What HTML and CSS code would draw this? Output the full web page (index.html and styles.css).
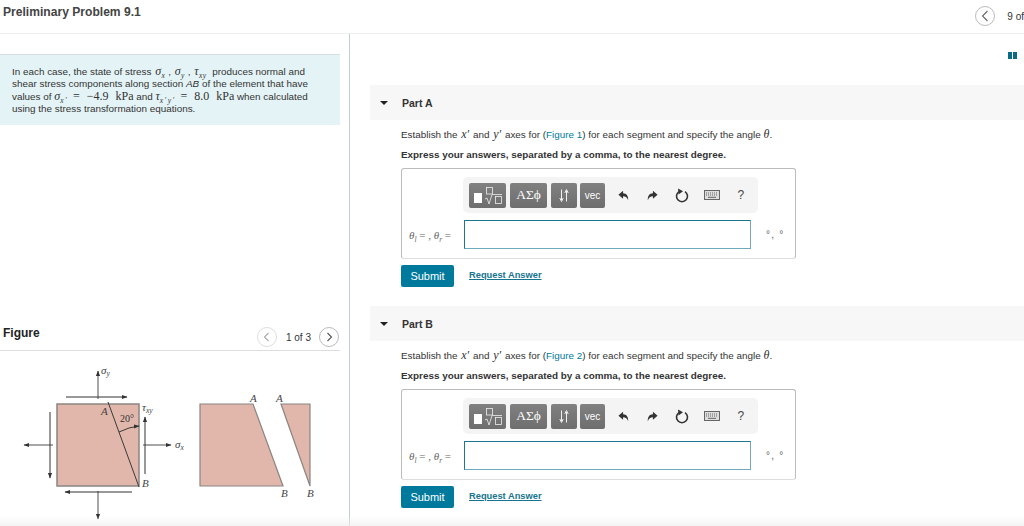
FILE: index.html
```html
<!DOCTYPE html>
<html lang="en">
<head>
    <meta charset="UTF-8">
    <title>Preliminary Problem 9.1</title>
    <link rel="stylesheet" href="styles.css">
</head>
<body>
    <header class="top-bar">
        <h1 class="page-title">Preliminary Problem 9.1</h1>
        <div class="top-nav">
            <span class="nav-btn nav-big"><svg width="8" height="12" viewBox="0 0 8 12"><path d="M6.5 1 L1.5 6 L6.5 11" fill="none" stroke="#666" stroke-width="1.1"/></svg></span>
            <span class="top-count">9 of</span>
        </div>
    </header>

    <div class="columns">
        <section class="left-col">
            <div class="intro">
                In each case, the state of stress <i class="m sym">σ<sub>x</sub></i>, <i class="m sym">σ<sub>y</sub></i>, <i class="m sym">τ<sub>xy</sub></i> produces normal and<br>
                shear stress components along section <i>AB</i> of the element that have<br>
                values of <i class="m sym-eq">σ<sub>x′</sub></i> <span class="m eq">= −4.9 kPa</span> and <i class="m sym-eq">τ<sub>x′y′</sub></i> <span class="m eq">= 8.0 kPa</span> when calculated<br>
                using the stress transformation equations.
            </div>

            <div class="figure-head">
                <h2 class="figure-title">Figure</h2>
                <div class="figure-nav">
                    <span class="nav-btn nav-off"><svg width="7" height="10" viewBox="0 0 7 10"><path d="M5.5 1 L1.5 5 L5.5 9" fill="none" stroke="#aaa" stroke-width="1.1"/></svg></span>
                    <span class="figure-count">1 of 3</span>
                    <span class="nav-btn"><svg width="7" height="10" viewBox="0 0 7 10"><path d="M1.5 1 L5.5 5 L1.5 9" fill="none" stroke="#555" stroke-width="1.1"/></svg></span>
                </div>
            </div>

            <svg class="diagram" width="340" height="166" viewBox="0 360 340 166">
                <defs>
                    <marker id="head" markerUnits="userSpaceOnUse" markerWidth="6" markerHeight="6" refX="5" refY="3" orient="auto">
                        <path d="M0 0.9 L5.5 3 L0 5.1 Z" fill="#333"/>
                    </marker>
                </defs>
                <rect x="57" y="405" width="82" height="82" fill="#e0b7aa" stroke="#8a8583" stroke-width="1.5"/>
                <path d="M200 405 H253 L283 487 H200 Z" fill="#e0b7aa" stroke="#8a8583" stroke-width="1.2"/>
                <path d="M281 405 H310 V487 Z" fill="#e0b7aa" stroke="#8a8583" stroke-width="1.2"/>
                <path d="M108 403 L139 488" stroke="#3a3a3a" fill="none"/>
                <path d="M119 433 Q129 428 139 427" stroke="#3a3a3a" fill="none" marker-end="url(#head)"/>

                <g fill="none" stroke="#777" stroke-width="1.3">
                    <path d="M98 400 V372" marker-end="url(#head)"/>
                    <path d="M143 446 H171" marker-end="url(#head)"/>
                    <path d="M53 446 H24" marker-end="url(#head)"/>
                    <path d="M98 492 V520" marker-end="url(#head)"/>
                </g>
                <g fill="none" stroke="#333" stroke-width="1">
                    <path d="M66 398 H127" marker-end="url(#head)"/>
                    <path d="M145 475 V418" marker-end="url(#head)"/>
                    <path d="M50 413 V479" marker-end="url(#head)"/>
                    <path d="M132 493 H65" marker-end="url(#head)"/>
                </g>

                <g class="fig-label">
                    <text x="101" y="375">σ<tspan class="fig-sub" dy="2">y</tspan></text>
                    <text x="175" y="449">σ<tspan class="fig-sub" dy="2">x</tspan></text>
                    <text x="142" y="412">τ<tspan class="fig-sub" dy="2">xy</tspan></text>
                    <text x="101" y="416">A</text>
                    <text x="142" y="488">B</text>
                    <text x="250" y="403">A</text>
                    <text x="276" y="403">A</text>
                    <text x="281" y="498">B</text>
                    <text x="307" y="498">B</text>
                </g>
                <text class="fig-angle" x="120" y="423">20°</text>
            </svg>
        </section>

        <main class="right-col">
            <div class="pause-row">
                <svg width="9" height="7" viewBox="0 0 9 7"><rect width="4" height="7" fill="#0b6a85"/><rect x="5" width="4" height="7" fill="#0b6a85"/></svg>
            </div>

            <section class="part">
                <div class="part-bar">
                    <span class="part-arrow"></span>
                    <h3 class="part-title">Part A</h3>
                </div>
                <div class="part-body">
                    <p class="question">Establish the <i class="m var">x′</i> and <i class="m var">y′</i> axes for (<a class="fig-link">Figure 1</a>) for each segment and specify the angle <i class="m">θ</i>.</p>
                    <p class="express">Express your answers, separated by a comma, to the nearest degree.</p>
                    <div class="answer-box">
                        <div class="toolbar">
                            <span class="tool tool-templates">
                                <svg width="31" height="19" viewBox="0 0 31 19"><rect x="2" y="7" width="8" height="10" fill="#fff"/><g fill="none" stroke="#eee" stroke-width="0.8"><rect x="14.5" y="1.5" width="6" height="6.5"/><path d="M13 13 L15 12 L17 18 L20 8.5 H30"/><rect x="23.5" y="10.5" width="6" height="7"/></g></svg>
                            </span>
                            <span class="tool tool-greek">ΑΣϕ</span>
                            <span class="tool tool-arrows"><svg width="10" height="13" viewBox="0 0 10 13"><path d="M2.5 0.5 V11 M0.8 9 L2.5 12.5 L4.2 9 M7.5 12.5 V2 M5.8 4 L7.5 0.5 L9.2 4" fill="none" stroke="#fff" stroke-width="0.9"/></svg></span>
                            <span class="tool tool-vec">vec</span>
                            <span class="action action-first"><svg width="11" height="11" viewBox="0 0 13 12"><path d="M0.5 5 L6 0.5 V3.2 C10 3.2 12.5 6.5 12 11.5 C11 8.5 9 7 6 7 V9.8 Z" fill="#333"/></svg></span>
                            <span class="action"><svg width="11" height="11" viewBox="0 0 13 12"><path d="M12.5 5 L7 0.5 V3.2 C3 3.2 0.5 6.5 1 11.5 C2 8.5 4 7 7 7 V9.8 Z" fill="#333"/></svg></span>
                            <span class="action"><svg width="14" height="15" viewBox="0 0 14 15"><path d="M4 3.6 A5.5 5.5 0 1 0 10 3.6" fill="none" stroke="#333" stroke-width="1.6"/><path d="M3 0.6 L8 3.2 L3.6 6.4 Z" fill="#333"/></svg></span>
                            <span class="action"><svg width="16" height="10" viewBox="0 0 16 10"><rect x="0.5" y="0.5" width="15" height="9" fill="#ddd" stroke="#666"/><path d="M2 3 H14 M2 5 H14" stroke="#666" stroke-dasharray="1 1"/><path d="M4 7.3 H12" stroke="#666"/></svg></span>
                            <span class="action action-help">?</span>
                        </div>
                        <div class="input-row">
                            <span class="input-label"><i>θ<sub>l</sub></i> = , <i>θ<sub>r</sub></i> =</span>
                            <span class="answer-input"></span>
                            <span class="units">°, °</span>
                        </div>
                    </div>
                    <div class="submit-row">
                        <span class="submit-btn">Submit</span>
                        <a class="request-link">Request Answer</a>
                    </div>
                </div>
            </section>

            <section class="part">
                <div class="part-bar">
                    <span class="part-arrow"></span>
                    <h3 class="part-title">Part B</h3>
                </div>
                <div class="part-body">
                    <p class="question">Establish the <i class="m var">x′</i> and <i class="m var">y′</i> axes for (<a class="fig-link">Figure 2</a>) for each segment and specify the angle <i class="m">θ</i>.</p>
                    <p class="express">Express your answers, separated by a comma, to the nearest degree.</p>
                    <div class="answer-box">
                        <div class="toolbar">
                            <span class="tool tool-templates">
                                <svg width="31" height="19" viewBox="0 0 31 19"><rect x="2" y="7" width="8" height="10" fill="#fff"/><g fill="none" stroke="#eee" stroke-width="0.8"><rect x="14.5" y="1.5" width="6" height="6.5"/><path d="M13 13 L15 12 L17 18 L20 8.5 H30"/><rect x="23.5" y="10.5" width="6" height="7"/></g></svg>
                            </span>
                            <span class="tool tool-greek">ΑΣϕ</span>
                            <span class="tool tool-arrows"><svg width="10" height="13" viewBox="0 0 10 13"><path d="M2.5 0.5 V11 M0.8 9 L2.5 12.5 L4.2 9 M7.5 12.5 V2 M5.8 4 L7.5 0.5 L9.2 4" fill="none" stroke="#fff" stroke-width="0.9"/></svg></span>
                            <span class="tool tool-vec">vec</span>
                            <span class="action action-first"><svg width="11" height="11" viewBox="0 0 13 12"><path d="M0.5 5 L6 0.5 V3.2 C10 3.2 12.5 6.5 12 11.5 C11 8.5 9 7 6 7 V9.8 Z" fill="#333"/></svg></span>
                            <span class="action"><svg width="11" height="11" viewBox="0 0 13 12"><path d="M12.5 5 L7 0.5 V3.2 C3 3.2 0.5 6.5 1 11.5 C2 8.5 4 7 7 7 V9.8 Z" fill="#333"/></svg></span>
                            <span class="action"><svg width="14" height="15" viewBox="0 0 14 15"><path d="M4 3.6 A5.5 5.5 0 1 0 10 3.6" fill="none" stroke="#333" stroke-width="1.6"/><path d="M3 0.6 L8 3.2 L3.6 6.4 Z" fill="#333"/></svg></span>
                            <span class="action"><svg width="16" height="10" viewBox="0 0 16 10"><rect x="0.5" y="0.5" width="15" height="9" fill="#ddd" stroke="#666"/><path d="M2 3 H14 M2 5 H14" stroke="#666" stroke-dasharray="1 1"/><path d="M4 7.3 H12" stroke="#666"/></svg></span>
                            <span class="action action-help">?</span>
                        </div>
                        <div class="input-row">
                            <span class="input-label"><i>θ<sub>l</sub></i> = , <i>θ<sub>r</sub></i> =</span>
                            <span class="answer-input"></span>
                            <span class="units">°, °</span>
                        </div>
                    </div>
                    <div class="submit-row">
                        <span class="submit-btn">Submit</span>
                        <a class="request-link">Request Answer</a>
                    </div>
                </div>
            </section>
        </main>
    </div>
    <div class="bottom-fade"></div>
</body>
</html>
```

FILE: styles.css
```css
html, body {
    height: 526px;
    overflow: hidden;
}
body {
    position: relative;
    margin: 0;
    font-family: 'Liberation Sans', Arial, sans-serif;
    font-size: 9.9px;
    color: #333;
    background: #fff;
}
i.m, .m {
    font-family: 'Liberation Serif', serif;
    font-size: 12px;
    line-height: 0;
}
.sym {
    margin: 0 3px 0 1px;
    letter-spacing: 0.4px;
}
.sym-eq {
    margin-right: 2px;
}
.sym-eq sub {
    letter-spacing: 1.5px;
}
.eq {
    word-spacing: 4px;
}
.var {
    margin: 0 1px;
}
sub {
    font-size: 7.5px;
    line-height: 0;
}

/* top bar */
.top-bar {
    display: flex;
    justify-content: space-between;
    align-items: center;
    box-sizing: border-box;
    height: 34px;
    padding: 0 0 9px 3px;
    border-bottom: 1px solid #eee;
}
.page-title {
    margin: 0;
    font-size: 12.1px;
    font-weight: bold;
    color: #444;
}
.top-nav {
    display: flex;
    align-items: center;
    gap: 12px;
    padding-top: 8px;
}
.top-count {
    font-size: 10px;
    white-space: nowrap;
}
.nav-btn {
    display: inline-flex;
    align-items: center;
    justify-content: center;
    box-sizing: border-box;
    width: 20px;
    height: 20px;
    border: 1px solid #bbb;
    border-radius: 50%;
    flex: none;
}
.nav-off {
    border-color: #ddd;
}

.columns {
    display: flex;
    height: 492px;
}

/* left column */
.left-col {
    box-sizing: border-box;
    width: 350px;
    border-right: 1px solid #c3ccd2;
    padding: 20px 9px 0 0;
    flex: none;
}
.intro {
    box-sizing: border-box;
    height: 71px;
    padding: 11px 12px 0;
    background: #e4f4f6;
    border-top: 1px solid #d5dedf;
    line-height: 12.4px;
    white-space: nowrap;
}
.figure-head {
    display: flex;
    justify-content: space-between;
    align-items: flex-end;
    height: 226px;
    box-sizing: border-box;
    padding: 0 1px 3px 3px;
    border-bottom: 1px solid #ddd;
}
.figure-title {
    margin: 0 0 7px;
    font-size: 12px;
    font-weight: bold;
    color: #222;
}
.figure-nav {
    display: flex;
    align-items: center;
    gap: 8px;
}
.figure-count {
    font-size: 10px;
    margin-left: 1px;
}
.diagram {
    display: block;
    margin-top: 8px;
}
.fig-label {
    font-family: 'Liberation Serif', serif;
    font-style: italic;
    font-size: 11px;
    fill: #444;
}
.fig-sub {
    font-size: 7.5px;
}
.fig-angle {
    font-family: 'Liberation Serif', serif;
    font-size: 10px;
    fill: #333;
}

/* right column */
.right-col {
    flex: 1;
    padding: 18px 0 0 20px;
    min-width: 0;
}
.pause-row {
    display: flex;
    justify-content: flex-end;
    height: 33px;
    padding-right: 7px;
}
.part {
    height: 221px;
}
.part-bar {
    display: flex;
    align-items: center;
    height: 35px;
    background: #f7f7f7;
}
.part-arrow {
    width: 0;
    height: 0;
    margin: 0 14px 0 10px;
    border-left: 4px solid transparent;
    border-right: 4px solid transparent;
    border-top: 4px solid #222;
}
.part-title {
    margin: 0;
    font-size: 10.5px;
    font-weight: bold;
    color: #333;
}
.part-body {
    padding: 8px 0 0 31px;
    width: 395px;
}
.question {
    margin: 0;
    height: 21px;
    line-height: 14px;
    white-space: nowrap;
}
.express {
    margin: 0;
    height: 19px;
    line-height: 12px;
    font-weight: bold;
    white-space: nowrap;
}
.fig-link {
    color: #007a9c;
}

/* answer box */
.answer-box {
    box-sizing: border-box;
    width: 395px;
    height: 91px;
    border: 1px solid #bbb;
    border-bottom-color: #ddd;
    border-radius: 3px;
    padding: 8px 0 0 61px;
}
.toolbar {
    display: flex;
    align-items: center;
    box-sizing: border-box;
    width: 295px;
    height: 36px;
    padding: 0 6px;
    gap: 4px;
    background: #f4f4f4;
    border-radius: 5px;
}
.tool {
    display: flex;
    align-items: center;
    justify-content: center;
    flex: none;
    height: 25px;
    border-radius: 2px;
    background: linear-gradient(#808080, #6e6e6e);
    color: #fff;
}
.tool-templates, .tool-greek {
    width: 37px;
}
.tool-greek {
    font-family: 'Liberation Serif', serif;
    font-size: 13.5px;
}
.tool-arrows {
    width: 26px;
    margin-right: -1px;
}
.tool-vec {
    width: 25px;
    font-size: 10px;
}
.action {
    display: flex;
    align-items: center;
    justify-content: center;
    width: 29.3px;
    height: 25px;
    flex: none;
    margin-left: -4px;
}
.action-first {
    margin-left: 0;
    margin-right: 0;
}
.action-help {
    font-size: 12px;
    color: #444;
}
.input-row {
    display: flex;
    align-items: center;
    margin: 7px 0 0 -54px;
}
.input-label {
    width: 55px;
    flex: none;
    font-family: 'Liberation Serif', serif;
    font-size: 11px;
    color: #666;
    white-space: nowrap;
}
.answer-input {
    box-sizing: border-box;
    width: 287px;
    height: 29px;
    flex: none;
    background: #fff;
    border: 1px solid #6eaab9;
    border-top-color: #1c7690;
    border-left-color: #1c7690;
}
.units {
    margin-left: 15px;
    font-size: 10px;
    letter-spacing: 1.2px;
    color: #666;
}

.submit-row {
    display: flex;
    align-items: center;
    gap: 15px;
    margin-top: 6px;
}
.submit-btn {
    display: flex;
    align-items: center;
    justify-content: center;
    width: 53px;
    height: 22px;
    background: #007a9c;
    border-radius: 2px;
    color: #fff;
    font-size: 11px;
}
.request-link {
    margin-bottom: 2px;
    font-size: 9.3px;
    font-weight: bold;
    color: #17748f;
    text-decoration: underline;
}

/* soft fade over the bottom edge of the page */
.bottom-fade {
    position: absolute;
    left: 0;
    right: 0;
    bottom: 0;
    height: 10px;
    background: linear-gradient(rgba(240, 240, 240, 0), rgba(240, 240, 240, 0.8));
}
```
